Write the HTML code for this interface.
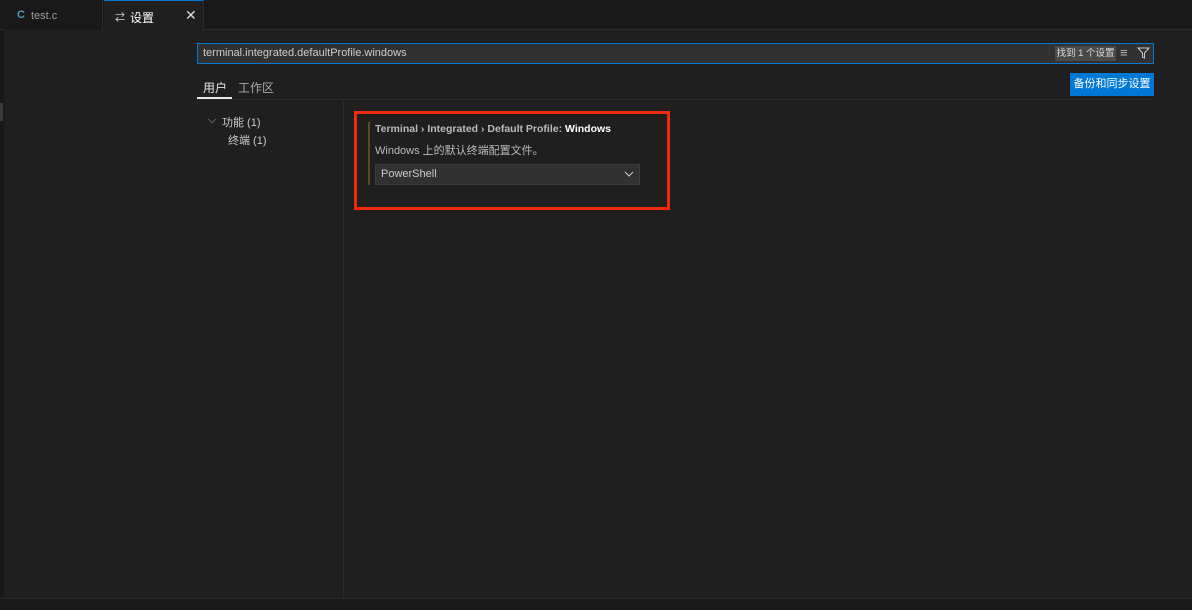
<!DOCTYPE html>
<html><head><meta charset="utf-8"><style>
*{margin:0;padding:0;box-sizing:border-box}
body{width:1192px;height:610px;background:#1f1f1f;font-family:"Liberation Sans","Noto Sans CJK SC",sans-serif;font-size:11px;color:#ccc;position:relative;overflow:hidden}
.a{position:absolute;white-space:nowrap}
</style></head><body>
<div class="a" style="left:0;top:0;width:1192px;height:30px;background:#181818;border-bottom:1px solid #2b2b2b"></div>
<div class="a" style="left:0;top:30px;width:4px;height:568px;background:#181818"></div>
<div class="a" style="left:0;top:103px;width:3px;height:18px;background:#3a3a3a"></div>
<div class="a" style="left:4px;top:0;width:99px;height:30px;background:#181818;border-right:1px solid #2b2b2b"></div>
<div class="a" style="left:17px;top:9px;color:#519aba;font-weight:bold;font-size:11px">C</div>
<div class="a" style="left:31px;top:10px;color:#9d9d9d">test.c</div>
<div class="a" style="left:104px;top:0;width:100px;height:31px;background:#1f1f1f;border-top:1px solid #0078d4;border-right:1px solid #2b2b2b"></div>
<div class="a" style="left:115px;top:9px;color:#ddd;font-size:10px">⇄</div>
<div class="a" style="left:130px;top:9px;color:#fff;font-size:12px">设置</div>
<div class="a" style="left:185px;top:7px;color:#ddd;font-size:14px">✕</div>

<div class="a" style="left:197px;top:43px;width:957px;height:21px;background:#313131;border:1px solid #0078d4"></div>
<div class="a" style="left:203px;top:47px;color:#ccc">terminal.integrated.defaultProfile.windows</div>
<div class="a" style="left:1055px;top:46px;width:61px;height:15px;background:#4a4a4a;color:#ddd;font-size:9.5px;line-height:15px;text-align:center">找到 1 个设置</div>
<div class="a" style="left:1120px;top:45px;color:#bbb;font-size:13px">≡</div>
<svg class="a" style="left:1137px;top:47px" width="13" height="12" viewBox="0 0 13 12"><path d="M1 1H12L7.5 6V11L5.5 10V6Z" fill="none" stroke="#ccc"/></svg>

<div class="a" style="left:203px;top:79px;color:#e7e7e7;font-size:12px">用户</div>
<div class="a" style="left:197px;top:97px;width:35px;height:2px;background:#e7e7e7"></div>
<div class="a" style="left:238px;top:79px;color:#aaa;font-size:12px">工作区</div>
<div class="a" style="left:197px;top:99px;width:957px;height:1px;background:#2b2b2b"></div>
<div class="a" style="left:1070px;top:73px;width:84px;height:23px;background:#0078d4;color:#fff;line-height:23px;text-align:center;font-size:11px">备份和同步设置</div>

<div class="a" style="left:208px;top:114px;color:#aaa">⌵</div>
<div class="a" style="left:222px;top:114px;color:#ccc">功能 (1)</div>
<div class="a" style="left:228px;top:132px;color:#ccc">终端 (1)</div>
<div class="a" style="left:343px;top:100px;width:1px;height:498px;background:#2b2b2b"></div>

<div class="a" style="left:354px;top:111px;width:316px;height:99px;border:3px solid #f02a0c"></div>
<div class="a" style="left:368px;top:122px;width:2px;height:63px;background:#5b4a2a"></div>
<div class="a" style="left:375px;top:123px;color:#bbb;font-weight:bold;font-size:10.5px">Terminal › Integrated › Default Profile: <span style="color:#fff">Windows</span></div>
<div class="a" style="left:375px;top:142px;color:#bbb;font-size:11px">Windows 上的默认终端配置文件。</div>
<div class="a" style="left:375px;top:164px;width:265px;height:21px;background:#313131;border:1px solid #3c3c3c;color:#ccc;font-size:11px;line-height:19px;padding-left:5px">PowerShell</div>
<svg class="a" style="left:624px;top:171px" width="10" height="6"><path d="M1 1L5 5L9 1" fill="none" stroke="#ccc"/></svg>

<div class="a" style="left:0;top:598px;width:1192px;height:12px;background:#181818;border-top:1px solid #2b2b2b"></div>
</body></html>
